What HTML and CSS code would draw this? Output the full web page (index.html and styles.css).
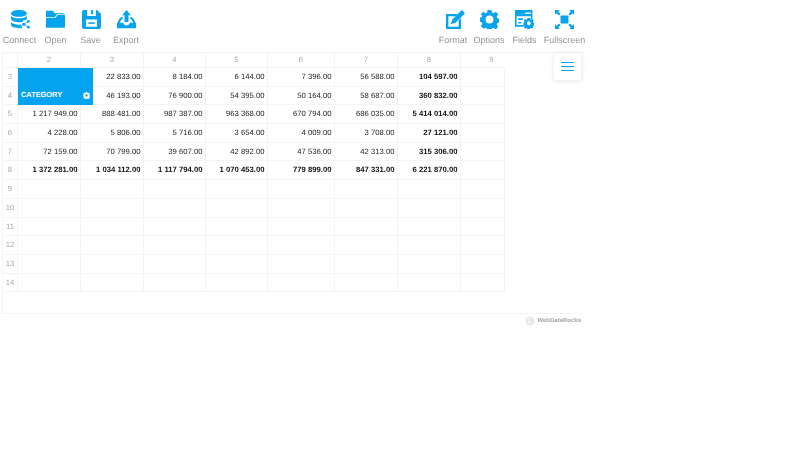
FILE: index.html
```html
<!DOCTYPE html>
<html lang="en">
<head>
<meta charset="utf-8">
<title>Pivot</title>
<link rel="stylesheet" href="styles.css">
</head>
<body>
<div class="app">
  <div class="toolbar">
    <div class="tools">
      <div class="tool t-connect"><svg class="ico" viewBox="0 0 24 24"><path d="M10 0c5.500 0 10 1.800 10 4.300s-4.500 4.300-10 4.300S0 6.800 0 4.300 4.500 0 10 0z"/><path d="M0 7.200c1.800 2.300 6 3.300 10 3.300s8.200-1 10-3.300v4.600l-1.500 1-2.500-.2-1.500 2.400c-1.400.3-3 .5-4.500.5-4.200 0-8.200-1.200-10-3.500z"/><path d="M0 15c1.800 2.300 5.800 3.500 10 3.500l2.500-.1 1 1.800.5 2.500c-1.300.2-2.700.3-4 .3-5.500 0-10-1.800-10-4.300z"/><path class="net" d="M16 18l6-3.700M16 18l6 3.700"/><circle cx="16" cy="18" r="2"/><circle cx="22" cy="14.300" r="1.800"/><circle cx="22" cy="21.700" r="1.800"/></svg><span>Connect</span></div>
      <div class="tool t-open"><svg class="ico" viewBox="0 0 24 24"><path d="M0 1h9l2 3h12v1h-9l-3 4H0z"/><path d="M0 10h11.800l3-4H24v15a1.500 1.500 0 0 1-1.500 1.500h-21A1.500 1.500 0 0 1 0 21z"/></svg><span>Open</span></div>
      <div class="tool t-save"><svg class="ico" viewBox="0 0 24 24"><path fill-rule="evenodd" d="M2.500 0H19l5 5v16.500a2.500 2.500 0 0 1-2.500 2.500h-19A2.500 2.500 0 0 1 0 21.500v-19A2.500 2.500 0 0 1 2.500 0zM6.500 0v7.500h11V0h-3.500v5.500h-2.500V0zM5 12v9h14v-9z"/><path d="M8 15.500h8v2H8z"/></svg><span>Save</span></div>
      <div class="tool t-export"><svg class="ico" viewBox="0 0 24 24"><path d="M12 0l5.500 6.500H14.500V15h-5V6.500H6.500z"/><path d="M7 8.500v2.800c-1 .4-1.500 1-2 2L3.500 16h4.300c.6 2.200 2.200 3.500 4.200 3.500s3.600-1.300 4.200-3.500h4.300l-1.500-2.700c-.5-1-1-1.600-2-2V8.500c2 .4 3.400 1.600 4.200 3.200l2.800 5.300V23H0v-6l2.800-5.300C3.600 10.100 5 8.900 7 8.500z"/></svg><span>Export</span></div>
    </div>
    <div class="tools">
      <div class="tool t-format"><svg class="ico" viewBox="0 0 24 24"><path d="M0 5h15l-3 3H3v13h13v-8l3-3v14H0z"/><path d="M20 0l4 4-12 12-6 2 2-6z"/></svg><span>Format</span></div>
      <div class="tool t-options"><svg class="ico" viewBox="0 0 24 24"><path fill-rule="evenodd" d="M9.500 0h5l.6 3.300 2.100.9L20 2.300 23 5.500l-1.900 2.700.9 2.100 2 .6v5l-2 .6-.9 2.100 1.900 2.700-3 3.200-2.800-1.900-2.100.9-.6 3h-5l-.6-3-2.100-.9L4 23.500 1 20.300l1.900-2.700-.9-2.100-2-.6v-5l2-.6.9-2.100L1 5.500 4 2.300l2.800 1.900 2.100-.9z M12 7a5 5 0 1 0 0 10 5 5 0 0 0 0-10z"/></svg><span>Options</span></div>
      <div class="tool t-fields"><svg class="ico" viewBox="0 0 24 24"><path fill-rule="evenodd" d="M0 0h22v12h-2V8H2v11h9v2H0zM13 3v2h7V3z"/><path d="M4 10.500h6v2H4zM4 15h4v2H4z"/><path fill-rule="evenodd" d="M15.500 11h3.500l.4 1.800 1.300.6 1.600-1 1.700 2-1 1.600.5 1.300 1 .4v3l-1 .4-.5 1.300.7 1.600-1.600 1-1.600-.5-1.300.4-.4 1.100h-3.500l-.4-1.100-1.300-.4-1.600.5-1.600-1 .7-1.600-.5-1.300-1-.4v-3l1-.4.5-1.300-1-1.600 1.700-2 1.600 1 1.300-.6zM17.200 15.500a2.600 2.600 0 1 0 0 5.200 2.600 2.600 0 0 0 0-5.200z" transform="translate(2 -.5) scale(.9 .95)"/></svg><span>Fields</span></div>
      <div class="tool t-full"><svg class="ico" viewBox="0 0 24 24"><rect x="7" y="7" width="10" height="10" rx="1"/><path d="M0 0h6L4 2l3 3-2 2-3-3-2 2zM24 0h-6l2 2-3 3 2 2 3-3 2 2zM0 24h6l-2-2 3-3-2-2-3 3-2-2zM24 24h-6l2-2-3-3 2-2 3 3 2-2z"/></svg><span>Fullscreen</span></div>
    </div>
  </div>
  <div class="sheet">
    <div class="row head"><div class="c rh"></div><div class="c">2</div><div class="c">3</div><div class="c">4</div><div class="c">5</div><div class="c">6</div><div class="c">7</div><div class="c">8</div><div class="c last">9</div></div>
    <div class="row"><div class="c rh">3</div><div class="c"></div><div class="c n">22 833.00</div><div class="c n">8 184.00</div><div class="c n">6 144.00</div><div class="c n">7 396.00</div><div class="c n">56 588.00</div><div class="c n b">104 597.00</div><div class="c"></div></div>
    <div class="row"><div class="c rh">4</div><div class="c"></div><div class="c n">46 193.00</div><div class="c n">76 900.00</div><div class="c n">54 395.00</div><div class="c n">50 164.00</div><div class="c n">58 687.00</div><div class="c n b">360 832.00</div><div class="c"></div></div>
    <div class="row"><div class="c rh">5</div><div class="c n">1 217 949.00</div><div class="c n">888 481.00</div><div class="c n">987 387.00</div><div class="c n">963 368.00</div><div class="c n">670 794.00</div><div class="c n">686 035.00</div><div class="c n b">5 414 014.00</div><div class="c"></div></div>
    <div class="row"><div class="c rh">6</div><div class="c n">4 228.00</div><div class="c n">5 806.00</div><div class="c n">5 716.00</div><div class="c n">3 654.00</div><div class="c n">4 009.00</div><div class="c n">3 708.00</div><div class="c n b">27 121.00</div><div class="c"></div></div>
    <div class="row"><div class="c rh">7</div><div class="c n">72 159.00</div><div class="c n">70 799.00</div><div class="c n">39 607.00</div><div class="c n">42 892.00</div><div class="c n">47 536.00</div><div class="c n">42 313.00</div><div class="c n b">315 306.00</div><div class="c"></div></div>
    <div class="row"><div class="c rh">8</div><div class="c n b">1 372 281.00</div><div class="c n b">1 034 112.00</div><div class="c n b">1 117 794.00</div><div class="c n b">1 070 453.00</div><div class="c n b">779 899.00</div><div class="c n b">847 331.00</div><div class="c n b">6 221 870.00</div><div class="c"></div></div>
    <div class="row"><div class="c rh">9</div><div class="c"></div><div class="c"></div><div class="c"></div><div class="c"></div><div class="c"></div><div class="c"></div><div class="c"></div><div class="c"></div></div>
    <div class="row"><div class="c rh">10</div><div class="c"></div><div class="c"></div><div class="c"></div><div class="c"></div><div class="c"></div><div class="c"></div><div class="c"></div><div class="c"></div></div>
    <div class="row"><div class="c rh">11</div><div class="c"></div><div class="c"></div><div class="c"></div><div class="c"></div><div class="c"></div><div class="c"></div><div class="c"></div><div class="c"></div></div>
    <div class="row"><div class="c rh">12</div><div class="c"></div><div class="c"></div><div class="c"></div><div class="c"></div><div class="c"></div><div class="c"></div><div class="c"></div><div class="c"></div></div>
    <div class="row"><div class="c rh">13</div><div class="c"></div><div class="c"></div><div class="c"></div><div class="c"></div><div class="c"></div><div class="c"></div><div class="c"></div><div class="c"></div></div>
    <div class="row"><div class="c rh">14</div><div class="c"></div><div class="c"></div><div class="c"></div><div class="c"></div><div class="c"></div><div class="c"></div><div class="c"></div><div class="c"></div></div>
    <div class="category"><span>CATEGORY</span><svg class="gear" viewBox="0 0 24 24"><path fill-rule="evenodd" d="M9.500 0h5l.6 3.300 2.100.9L20 2.300 23 5.500l-1.900 2.700.9 2.100 2 .6v5l-2 .6-.9 2.100 1.900 2.700-3 3.200-2.800-1.900-2.100.9-.6 3h-5l-.6-3-2.100-.9L4 23.500 1 20.300l1.900-2.700-.9-2.100-2-.6v-5l2-.6.9-2.100L1 5.500 4 2.300l2.800 1.900 2.100-.9z M12 8a4 4 0 1 0 0 8 4 4 0 0 0 0-8z"/></svg></div>
    <div class="menu"><i></i><i></i><i></i></div>
  </div>
  <div class="brand"><svg class="brand-ico" viewBox="0 0 12 12"><circle cx="6" cy="6" r="5.500"/><path d="M4 3v5h4" class="brand-mark"/></svg><span>WebDataRocks</span></div>
</div>
</body>
</html>
```
FILE: styles.css
```css
* { box-sizing: border-box; }
html, body { margin: 0; padding: 0; background: #fff; }
body { font-family: "Liberation Sans", Arial, sans-serif; text-rendering: geometricPrecision; }
.app { width: 800px; height: 450px; overflow: hidden; will-change: opacity; opacity: .999; }
.toolbar { height: 52px; width: 587px; display: flex; justify-content: space-between; padding: 10px 0 0 1px; }
.tools { display: flex; }
.tool { display: flex; flex-direction: column; align-items: center; color: #939393; font-size: 9px; line-height: 12px; }
.tool span { margin-top: 5px; white-space: nowrap; }
.ico { width: 19px; height: 19px; fill: #06a3ee; display: block; }
.ico .net { stroke: #06a3ee; stroke-width: 1; fill: none; }
.t-connect { width: 37px; }
.t-connect .ico { margin-left: 2px; }
.t-open { width: 35px; }
.t-save { width: 35px; }
.t-save .ico { margin-left: 2px; }
.t-export { width: 36px; }
.t-format { width: 36px; }
.t-format .ico { margin-left: 5px; }
.t-options { width: 36px; }
.t-fields { width: 35px; }
.t-full { width: 45px; }
.sheet { position: relative; margin-left: 2px; width: 580px; height: 262px; border-left: 1px solid #f4f4f4; border-top: 1px solid #f4f4f4; border-bottom: 1px solid #f4f4f4; }
.row { display: grid; grid-template-columns: 15px 63px 63px 62px 62px 67px 63px 63px 44px; width: 502px; height: 18.7px; border-bottom: 1px solid #f4f4f4; font-size: 7.7px; color: #1c1c1c; line-height: 18.500px; }
.head { height: 15px; line-height: 14px; color: #a6a6a6; text-align: center; }
.c { border-right: 1px solid #f4f4f4; white-space: nowrap; min-width: 0; }
.last { padding-left: 17px; border-right: 0; }
.rh { color: #a6a6a6; text-align: center; }
.n { text-align: right; padding-right: 2.500px; }
.b { font-weight: 700; color: #111; }
.category { position: absolute; left: 15px; top: 15px; width: 75px; height: 37px; background: #06a3ee; color: #fff; font-size: 7.4px; font-weight: 700; display: flex; align-items: flex-end; justify-content: space-between; padding: 0 3.500px 5px 3px; line-height: 10px; }
.gear { width: 7px; height: 7px; fill: #fff; margin-bottom: 1px; }
.menu { position: absolute; left: 551px; top: 0; width: 27px; height: 27px; background: #fff; box-shadow: 0 1px 6px rgba(0,0,0,.12); display: flex; flex-direction: column; gap: 3px; align-items: center; justify-content: center; }
.menu i { display: block; width: 13px; height: 1px; background: #06a3ee; }
.brand { display: flex; align-items: center; justify-content: flex-end; width: 581px; margin-top: 2px; gap: 2px; color: #a3a3a3; font-size: 6px; font-weight: 700; height: 10px; }
.brand-ico { width: 10px; height: 10px; fill: #e8e8e8; }
.brand-mark { fill: none; stroke: #fff; stroke-width: 1; }
```
